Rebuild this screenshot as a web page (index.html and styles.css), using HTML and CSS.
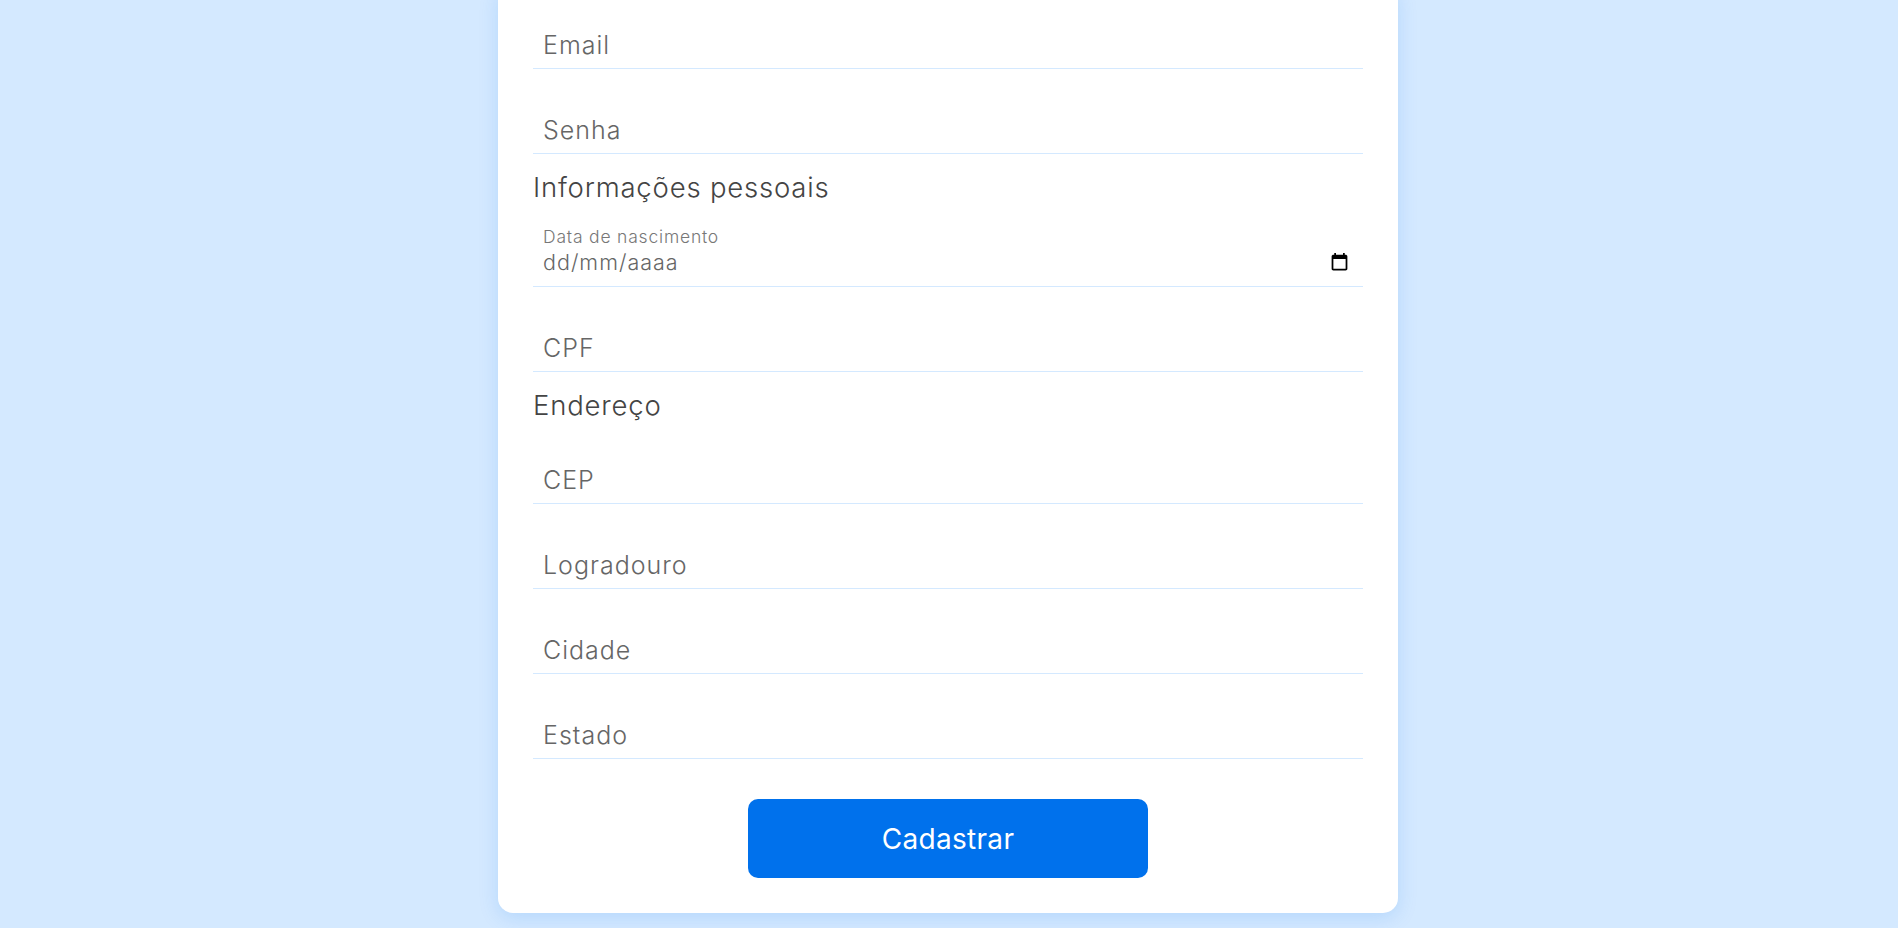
FILE: index.html
```html
<!DOCTYPE html>
<html lang="pt-BR">
<head>
<meta charset="utf-8">
<title>Cadastro</title>
<link rel="stylesheet" href="styles.css">
</head>
<body>
<main class="card">
  <form class="form">
    <label class="field"><span class="placeholder">Email</span></label>
    <label class="field"><span class="placeholder">Senha</span></label>
    <h2 class="section">Informações pessoais</h2>
    <label class="field field-date">
      <span class="date-col">
        <span class="date-label">Data de nascimento</span>
        <span class="date-value">dd/mm/aaaa</span>
      </span>
      <svg class="cal" viewBox="0 0 24 24" aria-hidden="true"><path d="M19 3h-1V1h-2v2H8V1H6v2H5c-1.1 0-2 .9-2 2v14c0 1.1.9 2 2 2h14c1.1 0 2-.9 2-2V5c0-1.1-.9-2-2-2zm0 16H5V8h14v11z"/></svg>
    </label>
    <label class="field"><span class="placeholder">CPF</span></label>
    <h2 class="section">Endereço</h2>
    <label class="field"><span class="placeholder">CEP</span></label>
    <label class="field"><span class="placeholder">Logradouro</span></label>
    <label class="field"><span class="placeholder">Cidade</span></label>
    <label class="field"><span class="placeholder">Estado</span></label>
    <div class="actions"><button class="submit" type="button">Cadastrar</button></div>
  </form>
</main>
</body>
</html>
```

FILE: styles.css
```css
* { box-sizing: border-box; }
html, body { height: 100%; }
body {
  margin: 0;
  height: 928px;
  overflow: hidden;
  background: #d4e9ff;
  display: flex;
  flex-direction: column;
  justify-content: flex-end;
  align-items: center;
  padding: 0 2px 15px 0;
  font-family: Inter, "Noto Sans", sans-serif;
}
.card {
  flex: none;
  width: 900px;
  padding: 0 35px 35px;
  background: #fff;
  border-radius: 15px;
  box-shadow: 0 5px 20px rgba(0, 113, 236, .15);
}
.form { display: flex; flex-direction: column; }
.field {
  height: 85px;
  display: flex;
  align-items: flex-end;
  justify-content: space-between;
  padding: 0 10px 7px;
  border-bottom: 1px solid #d4e9ff;
}
.placeholder {
  font-size: 25px;
  line-height: 32px;
  font-weight: 300;
  letter-spacing: 1px;
  color: #666;
}
.section {
  margin: 0;
  height: 47px;
  padding-top: 18px;
  display: flex;
  align-items: center;
  font-size: 27.5px;
  font-weight: 300;
  letter-spacing: .8px;
  color: #444;
}
.field-date { height: 86px; padding-bottom: 10px; }
.date-col { display: flex; flex-direction: column; }
.date-label {
  margin-bottom: -1px;
  font-size: 17.5px;
  line-height: 24px;
  font-weight: 300;
  letter-spacing: .8px;
  color: #777;
}
.date-value {
  font-size: 21.5px;
  line-height: 28px;
  font-weight: 300;
  letter-spacing: 1px;
  color: #666;
}
.cal { width: 21px; height: 21px; margin: 0 3px 3px 0; fill: #000; }
.actions { display: flex; justify-content: center; padding-top: 40px; }
.submit {
  width: 400px;
  height: 79px;
  border: 0;
  border-radius: 10px;
  background: #0071ec;
  color: #fff;
  font: 400 28px Inter, "Noto Sans", sans-serif;
  letter-spacing: .3px;
}
```
